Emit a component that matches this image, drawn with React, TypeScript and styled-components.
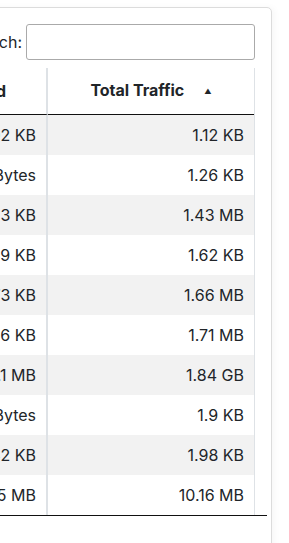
import React from "react";
import styled, { createGlobalStyle } from "styled-components";

const GlobalStyle = createGlobalStyle`
  body {
    margin: 0;
    background: #ffffff;
    font-family: Inter, "Noto Sans", sans-serif;
    color: #212529;
    overflow: hidden;
  }
`;

const Page = styled.div`
  display: flex;
  justify-content: flex-end;
  padding: 7px 17px 0 0;
  height: 543px;
  box-sizing: border-box;
  overflow: hidden;
`;

const Card = styled.div`
  flex-shrink: 0;
  width: 420px;
  min-height: 560px;
  padding: 16px 4px 0 16px;
  border: 1px solid #dcdcdc;
  border-radius: 5px;
  background: #fff;
  box-shadow: 3px 0 6px rgba(0, 0, 0, 0.03);
`;

const SearchRow = styled.div`
  display: flex;
  justify-content: flex-end;
  align-items: center;
  padding-right: 12px;
  margin-bottom: 8px;
`;

const Label = styled.label`
  font-size: 16px;
  line-height: 24px;
`;

const SearchInput = styled.input`
  box-sizing: border-box;
  width: 229px;
  height: 36px;
  margin-left: 4px;
  border: 1px solid #aaaaaa;
  border-radius: 3px;
  padding: 4px 8px;
  font: inherit;
  outline: none;
`;

const TableWrap = styled.div`
  display: flex;
  justify-content: flex-end;
  padding-right: 12px;
  border-bottom: 1px solid #111;
`;

const Table = styled.table`
  border-collapse: separate;
  border-spacing: 0;
  border-right: 1px solid #dee2e6;
  font-size: 16px;
  line-height: 24px;
`;

const Th = styled.th<{ $first?: boolean }>`
  width: ${(p) => (p.$first ? "140px" : "186px")};
  padding: ${(p) => (p.$first ? "10px 40px 10px 10px" : "10px")};
  text-align: ${(p) => (p.$first ? "right" : "center")};
  font-weight: 700;
  white-space: nowrap;
  border-bottom: 1px solid #111;
  border-right: ${(p) => (p.$first ? "2px solid #dee2e6" : "none")};
`;

const SortArrow = styled.span`
  display: inline-block;
  margin-left: 20px;
  font-size: 7px;
  vertical-align: 2px;
`;

const Row = styled.tr<{ $striped: boolean }>`
  background: ${(p) => (p.$striped ? "#f2f2f2" : "#ffffff")};
`;

const Td = styled.td<{ $first?: boolean }>`
  padding: 8px 10px;
  text-align: right;
  white-space: nowrap;
  border-right: ${(p) => (p.$first ? "2px solid #dee2e6" : "none")};
`;

const rows = [
  ["1.02 KB", "1.12 KB"],
  ["980 Bytes", "1.26 KB"],
  ["1.23 KB", "1.43 MB"],
  ["1.49 KB", "1.62 KB"],
  ["173 KB", "1.66 MB"],
  ["1.36 KB", "1.71 MB"],
  ["1.1 MB", "1.84 GB"],
  ["950 Bytes", "1.9 KB"],
  ["142 KB", "1.98 KB"],
  ["9.15 MB", "10.16 MB"],
];

export default function App() {
  return (
    <>
      <GlobalStyle />
      <Page>
        <Card>
          <SearchRow>
            <Label htmlFor="search">Search:</Label>
            <SearchInput id="search" type="search" />
          </SearchRow>
          <TableWrap>
            <Table>
              <thead>
                <tr>
                  <Th $first>Total Download</Th>
                  <Th>
                    Total Traffic
                    <SortArrow>▲</SortArrow>
                  </Th>
                </tr>
              </thead>
              <tbody>
                {rows.map((r, i) => (
                  <Row key={i} $striped={i % 2 === 0}>
                    <Td $first>{r[0]}</Td>
                    <Td>{r[1]}</Td>
                  </Row>
                ))}
              </tbody>
            </Table>
          </TableWrap>
        </Card>
      </Page>
    </>
  );
}
